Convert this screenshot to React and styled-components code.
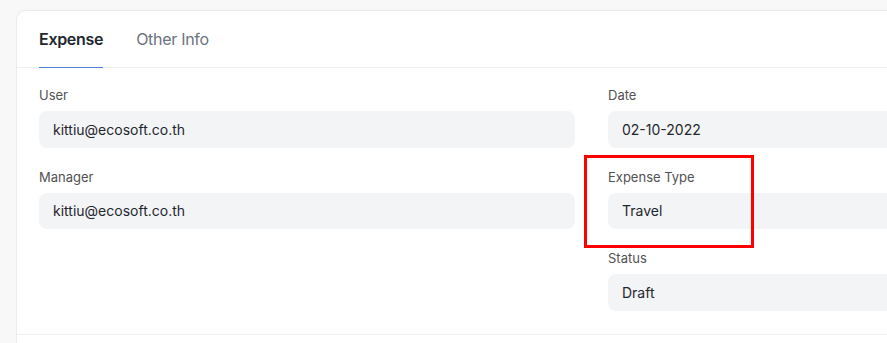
import React from "react";
import styled, { createGlobalStyle } from "styled-components";

const Global = createGlobalStyle`
  html, body { margin: 0; padding: 0; }
  body {
    background: #f7f8f7;
    font-family: Inter, "Noto Sans", sans-serif;
    overflow: hidden;
    width: 887px;
    height: 343px;
  }
`;

const Page = styled.div`
  width: 887px;
  height: 343px;
  overflow: hidden;
  padding: 11px 0 0 17px;
  box-sizing: border-box;
`;

const Card = styled.div`
  width: 1160px;
  background: #ffffff;
  border-radius: 9px 9px 0 0;
  box-shadow: 0 0 0 1px #ececec, 0 0 3px rgba(0, 0, 0, 0.05);
  min-height: 340px;
`;

const TabBar = styled.div`
  display: flex;
  gap: 33px;
  padding: 0 22px;
  height: 57px;
  border-bottom: 1px solid #f0f1f2;
  box-sizing: border-box;
`;

const Tab = styled.div`
  display: flex;
  align-items: center;
  font-size: 16px;
  font-weight: ${(p) => (p.$active ? 600 : 400)};
  color: ${(p) => (p.$active ? "#1f272e" : "#6b7280")};
  border-bottom: 1px solid ${(p) => (p.$active ? "#4f86d9" : "transparent")};
  margin-bottom: -1px;
  padding-bottom: 1px;
  letter-spacing: -0.3px;
`;

const Section = styled.div`
  display: grid;
  grid-template-columns: 536px 536px;
  column-gap: 33px;
  padding: 19px 22px 2px;
  border-bottom: 1px solid #f0f1f2;
`;

const Column = styled.div`
  display: flex;
  flex-direction: column;
`;

const Field = styled.div`
  position: relative;
  display: flex;
  flex-direction: column;
  margin-bottom: 21px;
`;

const Label = styled.div`
  font-size: 13px;
  line-height: 16px;
  color: #525252;
  margin-bottom: 8px;
`;

const Input = styled.div`
  height: 36.5px;
  box-sizing: border-box;
  border-radius: 8px;
  background: #f3f4f6;
  display: flex;
  align-items: center;
  padding: 0 14px;
  font-size: 14px;
  color: #1f272e;
`;

const Highlight = styled.div`
  position: absolute;
  left: -24px;
  top: -14px;
  width: 170px;
  height: 93px;
  box-sizing: border-box;
  border: 3px solid #ff0000;
  pointer-events: none;
`;

function FormField({ label, value, highlight }) {
  return (
    <Field>
      {highlight && <Highlight />}
      <Label>{label}</Label>
      <Input>{value}</Input>
    </Field>
  );
}

export default function App() {
  return (
    <>
      <Global />
      <Page>
        <Card>
          <TabBar>
            <Tab $active>Expense</Tab>
            <Tab>Other Info</Tab>
          </TabBar>
          <Section>
            <Column>
              <FormField label="User" value="kittiu@ecosoft.co.th" />
              <FormField label="Manager" value="kittiu@ecosoft.co.th" />
            </Column>
            <Column>
              <FormField label="Date" value="02-10-2022" />
              <FormField label="Expense Type" value="Travel" highlight />
              <FormField label="Status" value="Draft" />
            </Column>
          </Section>
        </Card>
      </Page>
    </>
  );
}
